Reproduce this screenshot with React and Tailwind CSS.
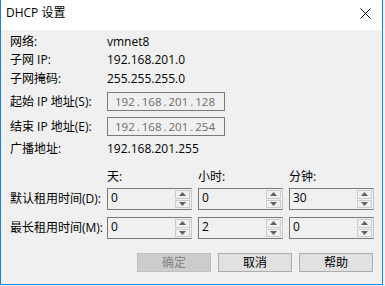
import React from "react";

const font = { fontFamily: "'Open Sans', 'Noto Sans CJK SC', sans-serif" };

const Arrow = ({ up }) => (
  <svg width="7" height="4" viewBox="0 0 7 4" className="block">
    {up ? <polygon points="3.5,0 7,4 0,4" fill="#606060" /> : <polygon points="0,0 7,0 3.5,4" fill="#606060" />}
  </svg>
);

const SpinBox = ({ value }) => (
  <div className="flex w-[85px] h-[22px] border border-[#7a7a7a] border-r-[#c8c8c8] bg-[#f0f0f0]">
    <div className="flex-1 pl-[3px] leading-[18px]">{value}</div>
    <div className="flex flex-col w-[17px] gap-px p-px">
      <div className="flex-1 flex items-center justify-center border border-[#cccccc] bg-[#f0f0f0]">
        <Arrow up />
      </div>
      <div className="flex-1 flex items-center justify-center border border-[#cccccc] bg-[#f0f0f0]">
        <Arrow />
      </div>
    </div>
  </div>
);

// ip control: four octets split by dots, grey because it is read-only
const IpBox = ({ parts }) => (
  <div className="flex items-center w-[118px] h-[19px] border border-[#7a7a7a] bg-[#f0f0f0] pl-[7px] text-[11.5px] text-[#6d6d6d] gap-[2px]">
    {parts.map((p, i) => (
      <React.Fragment key={i}>
        {i > 0 && <span>.</span>}
        <span>{p}</span>
      </React.Fragment>
    ))}
  </div>
);

const Row = ({ label, children, className = "" }) => (
  <div className={`flex items-center ${className}`}>
    <div className="w-[97px] shrink-0">{label}</div>
    {children}
  </div>
);

const Btn = ({ children, disabled }) => (
  <button
    className={`w-[74px] h-[19px] border text-[12px] leading-none ${
      disabled ? "bg-[#cccccc] border-[#bfbfbf] text-[#838383]" : "bg-[#e1e1e1] border-[#adadad] text-black"
    }`}
  >
    {children}
  </button>
);

export default function App() {
  return (
    <div className="w-[385px] h-[286px] bg-[#f3f3f3] text-[12px] text-black" style={font}>
      <div className="w-[383px] border-x border-b border-[#1883d7]">
        <div className="h-[30px] bg-white flex items-center justify-between pl-[5px] pr-[11px] pb-[4px]">
          <span className="text-[12px]">DHCP 设置</span>
          <svg width="11" height="11" viewBox="0 0 11 11">
            <path d="M0.5 0.5 L10.5 10.5 M10.5 0.5 L0.5 10.5" stroke="#000" strokeWidth="1" />
          </svg>
        </div>
        <div className="bg-[#f0f0f0] pl-[9px] pr-[9px] pt-[3px] pb-[12px]">
          <Row label="网络:" className="h-[18px]">vmnet8</Row>
          <Row label="子网 IP:" className="h-[18px]">192.168.201.0</Row>
          <Row label="子网掩码:" className="h-[19px]">255.255.255.0</Row>
          <Row label="起始 IP 地址(S):" className="h-[19px] mt-[4px]">
            <IpBox parts={["192", "168", "201", "128"]} />
          </Row>
          <Row label="结束 IP 地址(E):" className="h-[19px] mt-[6px]">
            <IpBox parts={["192", "168", "201", "254"]} />
          </Row>
          <Row label="广播地址:" className="h-[18px] mt-[4px]">192.168.201.255</Row>
          <Row label="" className="h-[16px] mt-[11px]">
            <div className="flex gap-[6px]">
              <div className="w-[85px]">天:</div>
              <div className="w-[85px]">小时:</div>
              <div className="w-[85px]">分钟:</div>
            </div>
          </Row>
          <Row label="默认租用时间(D):" className="h-[22px] mt-[3px]">
            <div className="flex gap-[6px]">
              <SpinBox value="0" />
              <SpinBox value="0" />
              <SpinBox value="30" />
            </div>
          </Row>
          <Row label="最长租用时间(M):" className="h-[22px] mt-[7px]">
            <div className="flex gap-[6px]">
              <SpinBox value="0" />
              <SpinBox value="2" />
              <SpinBox value="0" />
            </div>
          </Row>
          <div className="flex justify-end gap-[7px] mt-[14px]">
            <Btn disabled>确定</Btn>
            <Btn>取消</Btn>
            <Btn>帮助</Btn>
          </div>
        </div>
      </div>
    </div>
  );
}
